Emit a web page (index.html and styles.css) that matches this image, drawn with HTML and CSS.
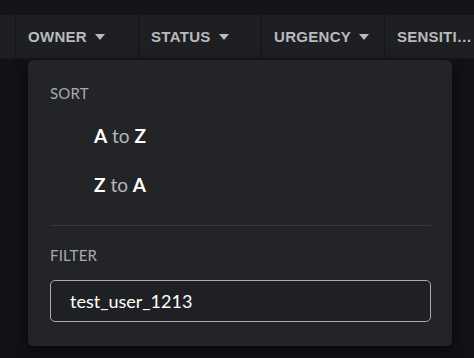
FILE: index.html
```html
<!DOCTYPE html>
<html>
<head>
<meta charset="utf-8">
<link rel="stylesheet" href="styles.css">
</head>
<body>
<div class="top"></div>
<div class="header">
  <div class="cell cell-stub"></div>
  <div class="cell"><span class="label">OWNER</span><span class="caret"></span></div>
  <div class="cell"><span class="label">STATUS</span><span class="caret"></span></div>
  <div class="cell"><span class="label">URGENCY</span><span class="caret"></span></div>
  <div class="cell cell-last"><span class="label" title="SENSITIVITY">SENSITI…</span></div>
</div>
<div class="content">
  <div class="panel">
    <div class="section-title">SORT</div>
    <div class="sort-list">
      <div class="sort-item"><b>A</b> <span class="to">to</span> <b>Z</b></div>
      <div class="sort-item"><b>Z</b> <span class="to">to</span> <b>A</b></div>
    </div>
    <div class="divider"></div>
    <div class="section-title filter-title">FILTER</div>
    <div class="input">test_user_1213</div>
  </div>
</div>
</body>
</html>
```
FILE: styles.css
```css
html, body {
  margin: 0;
  padding: 0;
  background: #111215;
  width: 474px;
  height: 358px;
  overflow: hidden;
}
.top {
  height: 15px;
  background: #141519;
}
.header {
  height: 43px;
  display: flex;
  background: #1e1f23;
  border-bottom: 1px solid #16171a;
}
.cell {
  flex: 0 0 auto;
  width: 110px;
  padding-left: 12px;
  border-right: 1px solid #131417;
  display: flex;
  align-items: center;
  gap: 8px;
  font-family: "Liberation Sans", Arial, sans-serif;
  font-weight: bold;
  font-size: 15px;
  letter-spacing: 0.3px;
  color: #b9babd;
}
.cell-stub {
  width: 15px;
  padding-left: 0;
}
.cell-last {
  flex: 1 1 auto;
  min-width: 0;
  border-right: none;
}
.cell-last .label {
  white-space: nowrap;
  letter-spacing: 0.2px;
}
.caret {
  width: 0;
  height: 0;
  border-left: 5px solid transparent;
  border-right: 5px solid transparent;
  border-top: 6px solid #b9babd;
  margin-top: 1px;
}
.content {
  padding: 1px 0 0 28px;
}
.panel {
  width: 381px;
  padding: 24px 21px 24px 22px;
  background: #232428;
  border-radius: 5px;
  box-shadow: 0 4px 14px rgba(0, 0, 0, 0.6);
  font-family: Lato, "Open Sans", sans-serif;
}
.section-title {
  font-size: 15px;
  color: #a9aaad;
  line-height: 18px;
  letter-spacing: 0.2px;
}
.sort-list {
  display: flex;
  flex-direction: column;
  gap: 27px;
  padding: 23px 0 0 44px;
}
.sort-item {
  font-size: 19px;
  line-height: 22px;
  color: #ffffff;
}
.sort-item b {
  font-weight: 700;
}
.sort-item .to {
  color: #b5b6b9;
  font-weight: 400;
}
.divider {
  height: 1px;
  background: #37383d;
  margin: 29px 0 0 0;
}
.filter-title {
  margin-top: 20px;
}
.input {
  margin-top: 16px;
  box-sizing: border-box;
  height: 42px;
  border: 1.5px solid #a8a9ac;
  border-radius: 5px;
  background: #1f2024;
  padding: 0 19px;
  display: flex;
  align-items: center;
  font-size: 18px;
  color: #ffffff;
}
```
